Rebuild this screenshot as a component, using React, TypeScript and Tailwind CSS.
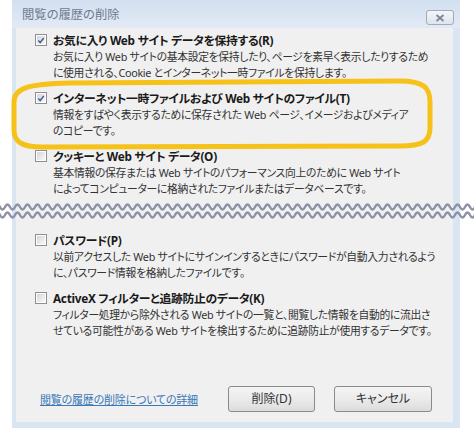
import React from "react";

const font = {
  fontFamily: '"Noto Sans", "Noto Sans CJK JP", sans-serif',
};

function wavePath(y: number, width: number) {
  let d = `M -5 ${y}`;
  for (let x = -5; x < width + 10; x += 10) {
    d += ` Q ${x + 2.5} ${y - 5} ${x + 5} ${y} Q ${x + 7.5} ${y + 5} ${x + 10} ${y}`;
  }
  return d;
}

function Checkbox({ checked }: { checked: boolean }) {
  return (
    <div className="w-[12px] h-[12px] shrink-0 border border-[#8f8f8f] bg-white p-[1px]">
      <div className="w-full h-full bg-gradient-to-br from-[#d6d6d6] to-[#f8f8f8] flex items-center justify-center">
        {checked && (
          <svg width="9" height="9" viewBox="0 0 9 9">
            <path d="M1.5 4.5 L3.6 6.8 L7.6 1.6" fill="none" stroke="#4a5e9c" strokeWidth="1.7" />
          </svg>
        )}
      </div>
    </div>
  );
}

function Row({
  checked,
  label,
  lines,
  className = "",
}: {
  checked: boolean;
  label: string;
  lines: string[];
  className?: string;
}) {
  return (
    <div className={`flex flex-col ${className}`}>
      <div className="flex items-center gap-[6px] h-[16px]">
        <Checkbox checked={checked} />
        <span className="text-[11.8px] font-bold tracking-[-0.3px] text-[#1a1a1a] whitespace-nowrap leading-[16px]">
          {label}
        </span>
      </div>
      <div className="mt-[1px] pl-[18px] text-[10.8px] tracking-[-0.3px] text-[#333] leading-[16px]">
        {lines.map((l, i) => (
          <div key={i} className="whitespace-nowrap">
            {l}
          </div>
        ))}
      </div>
    </div>
  );
}

export default function App() {
  return (
    <div className="relative w-[474px] h-[430px] bg-white overflow-hidden [font-feature-settings:'palt']" style={font}>
      <div className="ml-[12px] w-[448px] h-[428px] bg-[#dae5f2] flex flex-col">
        {/* title bar */}
        <div className="h-[28px] flex items-start justify-between bg-gradient-to-b from-[#d3e0f0] to-[#e2eaf5] pl-[10px] pr-[6px]">
          <span className="mt-[6px] text-[12.3px] text-[#6c7a8f] leading-[18px]">閲覧の履歴の削除</span>
          <div className="mt-[10px] w-[28px] h-[15px] rounded-[3px] border border-[#a3abb8] bg-gradient-to-b from-[#f3f6fa] to-[#dfe5ee] flex items-center justify-center">
            <svg width="10" height="8" viewBox="0 0 10 8">
              <path d="M1.5 1 L8.5 7 M8.5 1 L1.5 7" stroke="#7e8796" strokeWidth="1.8" fill="none" />
            </svg>
          </div>
        </div>
        {/* panel */}
        <div className="ml-[4px] mr-[7px] flex-1 mb-[6px] bg-[#f0f0f0] flex flex-col pt-[4px] pl-[19px]">
          <Row
            checked
            label="お気に入り Web サイト データを保持する(R)"
            lines={[
              "お気に入り Web サイトの基本設定を保持したり、ページを素早く表示したりするため",
              "に使用される、Cookie とインターネット一時ファイルを保持します。",
            ]}
          />
          <Row
            className="mt-[9px]"
            checked
            label="インターネット一時ファイルおよび Web サイトのファイル(T)"
            lines={["情報をすばやく表示するために保存された Web ページ、イメージおよびメディア", "のコピーです。"]}
          />
          <Row
            className="mt-[9px]"
            checked={false}
            label="クッキーと Web サイト データ(O)"
            lines={[
              "基本情報の保存または Web サイトのパフォーマンス向上のために Web サイト",
              "によってコンピューターに格納されたファイルまたはデータベースです。",
            ]}
          />
          <Row
            className="mt-[35px]"
            checked={false}
            label="パスワード(P)"
            lines={[
              "以前アクセスした Web サイトにサインインするときにパスワードが自動入力されるよう",
              "に、パスワード情報を格納したファイルです。",
            ]}
          />
          <Row
            className="mt-[9px]"
            checked={false}
            label="ActiveX フィルターと追跡防止のデータ(K)"
            lines={[
              "フィルター処理から除外される Web サイトの一覧と、閲覧した情報を自動的に流出さ",
              "せている可能性がある Web サイトを検出するために追跡防止が使用するデータです。",
            ]}
          />
          <div className="mt-auto mb-[10px] flex items-center pl-[5px] pr-[21px]">
            <a className="text-[11px] tracking-[-0.2px] text-[#3a78b8] underline leading-[16px] mt-[2px]" href="#">
              閲覧の履歴の削除についての詳細
            </a>
            <div className="ml-auto flex gap-[19px]">
              <button className="w-[87px] h-[26px] rounded-[3px] border border-[#8a8a8a] bg-gradient-to-b from-[#f4f4f4] via-[#ebebeb] to-[#dcdcdc] text-[12px] text-[#333]">
                削除(D)
              </button>
              <button className="w-[98px] h-[26px] rounded-[3px] border border-[#8a8a8a] bg-gradient-to-b from-[#f4f4f4] via-[#ebebeb] to-[#dcdcdc] text-[12px] text-[#333]">
                キャンセル
              </button>
            </div>
          </div>
        </div>
      </div>

      {/* yellow highlight */}
      <svg className="absolute left-0 top-0 pointer-events-none" width="474" height="430">
        <path
          d="M14 102 C14 88 28 84 70 83 L400 81 C424 81 430 88 430 102 L430 128 C430 142 422 146 400 146 L42 147 C22 147 14 142 14 130 Z"
          fill="none"
          stroke="#f6c21a"
          strokeWidth="5"
        />
      </svg>

      {/* cut waves */}
      <svg className="absolute left-0 top-[195px] pointer-events-none" width="474" height="30">
        <path d={wavePath(12, 474)} fill="none" stroke="#8c91a6" strokeWidth="2.4" />
        <path d={wavePath(20, 474)} fill="none" stroke="#8c91a6" strokeWidth="2.4" />
      </svg>
    </div>
  );
}
